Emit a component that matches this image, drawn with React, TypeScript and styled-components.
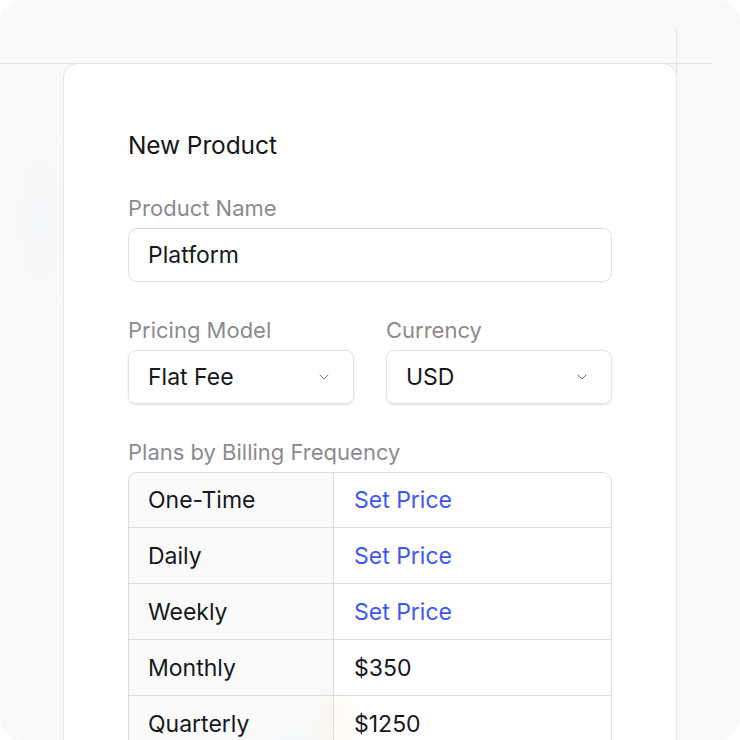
import styled, { createGlobalStyle } from "styled-components";
import { ChevronDown } from "lucide-react";

type Plan = {
  label: string;
  price?: string;
};

const plans: Plan[] = [
  { label: "One-Time" },
  { label: "Daily" },
  { label: "Weekly" },
  { label: "Monthly", price: "$350" },
  { label: "Quarterly", price: "$1250" },
];

export default function App() {
  return (
    <>
      <GlobalStyle />
      <Frame>
        <Glow />
        <HGuide />
        <VGuide />
        <Card>
          <Title>New Product</Title>

          <Field>
            <Label>Product Name</Label>
            <Input>Platform</Input>
          </Field>

          <Row>
            <Field $grow>
              <Label>Pricing Model</Label>
              <Select>
                <span>Flat Fee</span>
                <ChevronDown size={16} strokeWidth={1.5} color="#777" />
              </Select>
            </Field>
            <Field $grow>
              <Label>Currency</Label>
              <Select>
                <span>USD</span>
                <ChevronDown size={16} strokeWidth={1.5} color="#777" />
              </Select>
            </Field>
          </Row>

          <Field>
            <Label>Plans by Billing Frequency</Label>
            <Table>
              {plans.map((p) => (
                <TableRow key={p.label}>
                  <Cell $head>{p.label}</Cell>
                  <Cell $link={!p.price}>{p.price ?? "Set Price"}</Cell>
                </TableRow>
              ))}
            </Table>
          </Field>
          <TableGlow />
        </Card>
      </Frame>
    </>
  );
}

const GlobalStyle = createGlobalStyle`
  html, body {
    margin: 0;
    padding: 0;
    background: #ffffff;
  }
  body {
    font-family: Inter, "Noto Sans", "Liberation Sans", sans-serif;
    -webkit-font-smoothing: antialiased;
  }
`;

const Frame = styled.div`
  position: relative;
  width: 740px;
  height: 740px;
  box-sizing: border-box;
  overflow: hidden;
  border-radius: 22px;
  background: #f9f9f9;
  padding: 63px 0 0 63px;
`;

const Glow = styled.div`
  position: absolute;
  inset: 0;
  pointer-events: none;
  background:
    radial-gradient(ellipse 110px 80px at 230px 110px, rgba(255, 220, 170, 0.12), transparent 70%),
    radial-gradient(ellipse 50px 140px at 40px 220px, rgba(200, 225, 255, 0.1), transparent 70%);
`;

const HGuide = styled.div`
  position: absolute;
  left: 0;
  top: 63px;
  width: 712px;
  height: 1px;
  background: #e4e4e7;
`;

const VGuide = styled.div`
  position: absolute;
  left: 676px;
  top: 28px;
  bottom: 0;
  width: 1px;
  background: #e4e4e7;
`;

const Card = styled.div`
  position: relative;
  z-index: 1;
  width: 614px;
  min-height: 720px;
  box-sizing: border-box;
  background: #ffffff;
  border: 1px solid #e6e6ea;
  border-radius: 14px 14px 0 0;
  padding: 64px 64px 0 64px;
  display: flex;
  flex-direction: column;
  gap: 35px;
`;

const Title = styled.h1`
  margin: 0 0 -2px;
  font-size: 24.5px;
  line-height: 34px;
  font-weight: 400;
  color: #15161a;
  letter-spacing: -0.1px;
`;

const Field = styled.div<{ $grow?: boolean }>`
  display: flex;
  flex-direction: column;
  gap: 7px;
  flex: ${(p) => (p.$grow ? "1 1 0" : "0 0 auto")};
  min-width: 0;
`;

const Label = styled.div`
  font-size: 22px;
  line-height: 26px;
  color: #8b8b8f;
  font-weight: 400;
`;

const Input = styled.div`
  height: 54px;
  box-sizing: border-box;
  border: 1px solid #dedee2;
  border-radius: 9px;
  padding: 0 19px;
  display: flex;
  align-items: center;
  font-size: 23px;
  color: #17181c;
`;

const Row = styled.div`
  display: flex;
  gap: 32px;
`;

const Select = styled.div`
  height: 54px;
  box-sizing: border-box;
  border: 1px solid #e3e3e7;
  border-radius: 8px;
  padding: 0 21px 0 19px;
  display: flex;
  align-items: center;
  justify-content: space-between;
  font-size: 23px;
  color: #17181c;
  box-shadow: 0 1px 2px rgba(0, 0, 0, 0.12);
`;

const Table = styled.div`
  border: 1px solid #dcdce0;
  border-radius: 9px;
  overflow: hidden;
  display: flex;
  flex-direction: column;
`;

const TableRow = styled.div`
  display: grid;
  grid-template-columns: 205px 1fr;
  box-sizing: border-box;
  height: 56px;
  border-bottom: 1px solid #dcdce0;
  &:first-child {
    height: 55px;
  }
`;

const Cell = styled.div<{ $head?: boolean; $link?: boolean }>`
  display: flex;
  align-items: center;
  padding-left: ${(p) => (p.$head ? "19px" : "20px")};
  font-size: 23px;
  color: ${(p) => (p.$link ? "#3d57f5" : "#17181c")};
  background: ${(p) => (p.$head ? "#fafafa" : "#ffffff")};
  border-right: ${(p) => (p.$head ? "1px solid #dcdce0" : "none")};
`;

const TableGlow = styled.div`
  position: absolute;
  left: 200px;
  top: 560px;
  width: 110px;
  height: 170px;
  pointer-events: none;
  background:
    radial-gradient(ellipse 40px 70px at 70px 110px, rgba(255, 220, 170, 0.18), transparent 75%),
    radial-gradient(ellipse 50px 60px at 30px 140px, rgba(190, 230, 255, 0.2), transparent 75%);
`;
